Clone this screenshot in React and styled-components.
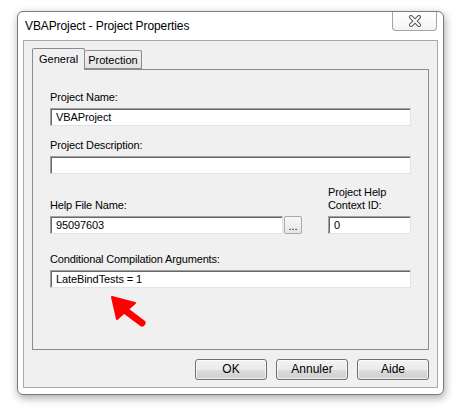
import React from "react";
import styled, { createGlobalStyle } from "styled-components";

const Global = createGlobalStyle`
  body {
    margin: 0;
    background: #ffffff;
    font-family: "Liberation Sans", Arial, sans-serif;
  }
`;

const Page = styled.div`
  width: 460px;
  height: 410px;
  padding: 11px 0 0 17px;
  box-sizing: border-box;
`;

const Window = styled.div`
  width: 427px;
  height: 384px;
  box-sizing: border-box;
  background: #ffffff;
  border: 1px solid #7b7b7b;
  border-radius: 6px;
  box-shadow: 1px 3px 9px rgba(0, 0, 0, 0.35);
  display: flex;
  flex-direction: column;
`;

const TitleBar = styled.div`
  height: 28px;
  display: flex;
  justify-content: space-between;
  align-items: flex-start;
`;

const Title = styled.div`
  margin: 7px 0 0 7px;
  font-size: 12px;
  color: #000;
  letter-spacing: -0.1px;
`;

const CloseButton = styled.div`
  width: 45px;
  height: 19px;
  box-sizing: border-box;
  margin-right: 6px;
  border: 1px solid #a4a4a4;
  border-top: none;
  border-radius: 0 0 4px 4px;
  background: linear-gradient(#ffffff, #f4f4f4);
  display: flex;
  justify-content: center;
  align-items: center;
`;

const Client = styled.div`
  flex: 1;
  margin: 0 5px 6px 5px;
  border: 1px solid #a9a9a9;
  background: #f0f0f0;
  padding: 7px 8px 0 8px;
  display: flex;
  flex-direction: column;
`;

const TabStrip = styled.div`
  display: flex;
  align-items: flex-end;
  height: 21px;
  position: relative;
  z-index: 1;
`;

const Tab = styled.div`
  box-sizing: border-box;
  height: ${(p) => (p.$active ? "22px" : "19px")};
  padding: 0 ${(p) => (p.$active ? "6px" : "3px")};
  margin-bottom: ${(p) => (p.$active ? "-1px" : "0")};
  border: 1px solid #898c95;
  border-bottom: ${(p) => (p.$active ? "none" : "1px solid #898c95")};
  border-left: ${(p) => (p.$active ? "1px solid #898c95" : "none")};
  border-radius: 2px 2px 0 0;
  background: ${(p) =>
    p.$active ? "#f0f0f0" : "linear-gradient(#f2f2f2, #e3e3e3)"};
  font-size: 11px;
  line-height: ${(p) => (p.$active ? "20px" : "18px")};
  color: #000;
`;

const Panel = styled.div`
  position: relative;
  height: 281px;
  box-sizing: border-box;
  border: 1px solid #898c95;
  background: #f0f0f0;
  padding: 21px 17px 0 17px;
`;

const Label = styled.div`
  font-size: 11px;
  line-height: 13px;
  letter-spacing: -0.15px;
  color: #000;
  margin-bottom: 4px;
`;

const Field = styled.div`
  margin-top: ${(p) => p.$gap || 0}px;
`;

const TextBox = styled.div`
  height: 18px;
  box-sizing: border-box;
  border: 1px solid;
  border-color: #a0a0a0 #e3e3e3 #e3e3e3 #a0a0a0;
  box-shadow: inset 1px 1px 0 #696969;
  background: #ffffff;
  padding: 0 5px;
  font-size: 11px;
  line-height: 17px;
  letter-spacing: -0.1px;
  color: #000;
  flex: 1;
  white-space: nowrap;
`;

const HelpGrid = styled.div`
  display: grid;
  grid-template-columns: 1fr 83px;
  column-gap: 26px;
  align-items: end;
  margin-top: 12px;
`;

const InlineRow = styled.div`
  display: flex;
  gap: 1px;
`;

const SmallButton = styled.div`
  width: 18px;
  height: 18px;
  box-sizing: border-box;
  border: 1px solid #a8a8a8;
  border-radius: 2px;
  background: linear-gradient(#f7f7f7, #e6e6e6);
  font-size: 11px;
  line-height: 18px;
  text-align: center;
  color: #000;
`;

const Arrow = styled.svg`
  position: absolute;
  left: 76px;
  top: 224px;
`;

const ButtonRow = styled.div`
  display: flex;
  justify-content: flex-end;
  gap: 9px;
  margin-top: 9px;
`;

const DialogButton = styled.div`
  width: 72px;
  height: 21px;
  box-sizing: border-box;
  border: 1px solid #707070;
  border-radius: 3px;
  background: linear-gradient(#f2f2f2 0%, #ebebeb 50%, #dddddd 51%, #cfcfcf 100%);
  box-shadow: inset 0 0 0 1px rgba(255, 255, 255, 0.7);
  font-size: 12px;
  line-height: 19px;
  text-align: center;
  color: #000;
`;

const CloseGlyph = () => (
  <svg width="14" height="12" viewBox="0 0 14 12">
    <g strokeLinecap="round">
      <path d="M3 2 L11 10 M11 2 L3 10" stroke="#5a5a5a" strokeWidth="4" />
      <path d="M3 2 L11 10 M11 2 L3 10" stroke="#ffffff" strokeWidth="2" />
    </g>
  </svg>
);

const App = () => {
  return (
    <Page>
      <Global />
      <Window>
        <TitleBar>
          <Title>VBAProject - Project Properties</Title>
          <CloseButton>
            <CloseGlyph />
          </CloseButton>
        </TitleBar>
        <Client>
          <TabStrip>
            <Tab $active>General</Tab>
            <Tab>Protection</Tab>
          </TabStrip>
          <Panel>
            <Field>
              <Label>Project Name:</Label>
              <TextBox>VBAProject</TextBox>
            </Field>
            <Field $gap={13}>
              <Label>Project Description:</Label>
              <TextBox />
            </Field>
            <HelpGrid>
              <Label>Help File Name:</Label>
              <Label>
                Project Help
                <br />
                Context ID:
              </Label>
              <InlineRow>
                <TextBox>95097603</TextBox>
                <SmallButton>...</SmallButton>
              </InlineRow>
              <TextBox>0</TextBox>
            </HelpGrid>
            <Field $gap={19}>
              <Label>Conditional Compilation Arguments:</Label>
              <TextBox>LateBindTests = 1</TextBox>
            </Field>
            <Arrow width="40" height="36" viewBox="0 0 40 36">
              <path
                d="M3 3 L26 9 L8 25 Z"
                fill="#ff0000"
                stroke="#ff0000"
                strokeWidth="2"
                strokeLinejoin="round"
              />
              <path
                d="M13 14 L33 29"
                stroke="#ff0000"
                strokeWidth="7"
                strokeLinecap="round"
              />
            </Arrow>
          </Panel>
          <ButtonRow>
            <DialogButton>OK</DialogButton>
            <DialogButton>Annuler</DialogButton>
            <DialogButton>Aide</DialogButton>
          </ButtonRow>
        </Client>
      </Window>
    </Page>
  );
};

export default App;
